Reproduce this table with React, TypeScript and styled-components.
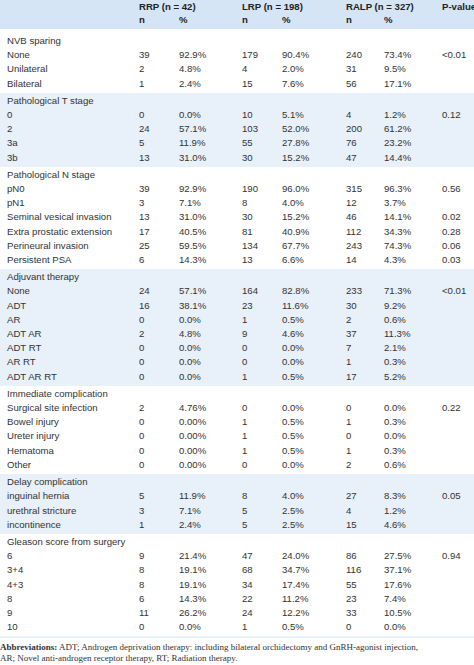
import React from "react";
import styled, { createGlobalStyle } from "styled-components";

const GlobalStyle = createGlobalStyle`
  html, body {
    margin: 0;
    padding: 0;
    background: #ffffff;
    overflow: hidden;
  }
`;

// Styled Components
const Page = styled.div`
  width: 520px;
  font-family: "Liberation Sans", Arial, sans-serif;
  font-size: 9.6px;
  color: #333;
`;

const Row = styled.div<{ $lh?: number }>`
  display: grid;
  grid-template-columns: 132px 40px 63px 40px 64px 38px 58px 70px;
  padding-left: 7px;
  line-height: ${(p) => p.$lh ?? 14.2}px;
  white-space: nowrap;
`;

const Header = styled.div`
  background: #d6e5f6;
  padding-bottom: 2px;
  font-weight: bold;
  color: #222;
`;

const Span2 = styled.div`
  grid-column: span 2;
`;

const Section = styled.div<{ $alt?: boolean; $top?: number }>`
  background: ${(p) => (p.$alt ? "#e8f0fa" : "#ffffff")};
  padding: ${(p) => p.$top ?? 2}px 0 2px;
`;

const Cell = styled.div``;

const TableEnd = styled.div`
  height: 2px;
  background: #e8f0fa;
`;

const Footnote = styled.p`
  margin: 4px 0 0;
  font-family: "Liberation Serif", "Times New Roman", serif;
  font-size: 9px;
  line-height: 11px;
  color: #333;
`;

type Line = [string, ...string[]];

const sections: { title: string; rows: Line[] }[] = [
  {
    title: "NVB sparing",
    rows: [
      ["None", "39", "92.9%", "179", "90.4%", "240", "73.4%", "<0.01"],
      ["Unilateral", "2", "4.8%", "4", "2.0%", "31", "9.5%"],
      ["Bilateral", "1", "2.4%", "15", "7.6%", "56", "17.1%"],
    ],
  },
  {
    title: "Pathological T stage",
    rows: [
      ["0", "0", "0.0%", "10", "5.1%", "4", "1.2%", "0.12"],
      ["2", "24", "57.1%", "103", "52.0%", "200", "61.2%"],
      ["3a", "5", "11.9%", "55", "27.8%", "76", "23.2%"],
      ["3b", "13", "31.0%", "30", "15.2%", "47", "14.4%"],
    ],
  },
  {
    title: "Pathological N stage",
    rows: [
      ["pN0", "39", "92.9%", "190", "96.0%", "315", "96.3%", "0.56"],
      ["pN1", "3", "7.1%", "8", "4.0%", "12", "3.7%"],
      ["Seminal vesical invasion", "13", "31.0%", "30", "15.2%", "46", "14.1%", "0.02"],
      ["Extra prostatic extension", "17", "40.5%", "81", "40.9%", "112", "34.3%", "0.28"],
      ["Perineural invasion", "25", "59.5%", "134", "67.7%", "243", "74.3%", "0.06"],
      ["Persistent PSA", "6", "14.3%", "13", "6.6%", "14", "4.3%", "0.03"],
    ],
  },
  {
    title: "Adjuvant therapy",
    rows: [
      ["None", "24", "57.1%", "164", "82.8%", "233", "71.3%", "<0.01"],
      ["ADT", "16", "38.1%", "23", "11.6%", "30", "9.2%"],
      ["AR", "0", "0.0%", "1", "0.5%", "2", "0.6%"],
      ["ADT AR", "2", "4.8%", "9", "4.6%", "37", "11.3%"],
      ["ADT RT", "0", "0.0%", "0", "0.0%", "7", "2.1%"],
      ["AR RT", "0", "0.0%", "0", "0.0%", "1", "0.3%"],
      ["ADT AR RT", "0", "0.0%", "1", "0.5%", "17", "5.2%"],
    ],
  },
  {
    title: "Immediate complication",
    rows: [
      ["Surgical site infection", "2", "4.76%", "0", "0.0%", "0", "0.0%", "0.22"],
      ["Bowel injury", "0", "0.00%", "1", "0.5%", "1", "0.3%"],
      ["Ureter injury", "0", "0.00%", "1", "0.5%", "0", "0.0%"],
      ["Hematoma", "0", "0.00%", "1", "0.5%", "1", "0.3%"],
      ["Other", "0", "0.00%", "0", "0.0%", "2", "0.6%"],
    ],
  },
  {
    title: "Delay complication",
    rows: [
      ["inguinal hernia", "5", "11.9%", "8", "4.0%", "27", "8.3%", "0.05"],
      ["urethral stricture", "3", "7.1%", "5", "2.5%", "4", "1.2%"],
      ["incontinence", "1", "2.4%", "5", "2.5%", "15", "4.6%"],
    ],
  },
  {
    title: "Gleason score from surgery",
    rows: [
      ["6", "9", "21.4%", "47", "24.0%", "86", "27.5%", "0.94"],
      ["3+4", "8", "19.1%", "68", "34.7%", "116", "37.1%"],
      ["4+3", "8", "19.1%", "34", "17.4%", "55", "17.6%"],
      ["8", "6", "14.3%", "22", "11.2%", "23", "7.4%"],
      ["9", "11", "26.2%", "24", "12.2%", "33", "10.5%"],
      ["10", "0", "0.0%", "1", "0.5%", "0", "0.0%"],
    ],
  },
];

const App = () => {
  return (
    <Page>
      <GlobalStyle />
      <Header>
        <Row $lh={13}>
          <Cell />
          <Span2>RRP (n = 42)</Span2>
          <Span2>LRP (n = 198)</Span2>
          <Span2>RALP (n = 327)</Span2>
          <Cell>P-value</Cell>
        </Row>
        <Row $lh={14}>
          <Cell />
          <Cell>n</Cell>
          <Cell>%</Cell>
          <Cell>n</Cell>
          <Cell>%</Cell>
          <Cell>n</Cell>
          <Cell>%</Cell>
        </Row>
      </Header>

      {sections.map((section, i) => (
        <Section key={section.title} $alt={i % 2 === 1} $top={i === 0 ? 5 : 1}>
          <Row>
            <Cell>{section.title}</Cell>
          </Row>
          {section.rows.map((row, j) => (
            <Row key={j}>
              {row.map((value, k) => (
                <Cell key={k}>{value}</Cell>
              ))}
            </Row>
          ))}
        </Section>
      ))}
      <TableEnd />

      <Footnote>
        <b>Abbreviations:</b> ADT; Androgen deprivation therapy: including bilateral
        orchidectomy and GnRH-agonist injection,
        <br />
        AR; Novel anti-androgen receptor therapy, RT; Radiation therapy.
      </Footnote>
    </Page>
  );
};

export default App;
